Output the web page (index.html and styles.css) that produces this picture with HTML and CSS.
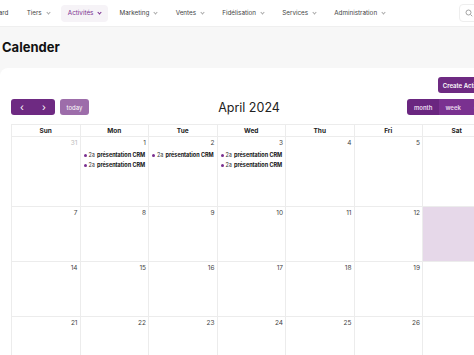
FILE: index.html
```html
<!DOCTYPE html>
<html lang="fr">
<head>
    <meta charset="UTF-8">
    <meta name="viewport" content="width=device-width, initial-scale=1.0">
    <title>Calender</title>
    <link rel="stylesheet" href="styles.css">
</head>
<body>
    <nav class="topbar">
        <ul class="menu">
            <li class="menu-item">Dashboard</li>
            <li class="menu-item">Tiers <span class="chev"></span></li>
            <li class="menu-item active">Activités <span class="chev"></span></li>
            <li class="menu-item">Marketing <span class="chev"></span></li>
            <li class="menu-item">Ventes <span class="chev"></span></li>
            <li class="menu-item">Fidélisation <span class="chev"></span></li>
            <li class="menu-item">Services <span class="chev"></span></li>
            <li class="menu-item">Administration <span class="chev"></span></li>
        </ul>
        <div class="search">
            <svg width="8" height="8" viewBox="0 0 16 16" fill="none" stroke="#9a9a9a" stroke-width="1.8">
                <circle cx="7" cy="7" r="5"/>
                <path d="M11 11l3.5 3.5"/>
            </svg>
        </div>
    </nav>

    <header class="page-title">
        <h1>Calender</h1>
    </header>

    <main class="card">
        <div class="actions">
            <button class="btn-create">Create Activity</button>
        </div>

        <div class="toolbar">
            <div class="toolbar-left">
                <div class="btn-group">
                    <button class="btn-nav">&#8249;</button>
                    <button class="btn-nav">&#8250;</button>
                </div>
                <button class="btn-today">today</button>
            </div>
            <h2 class="cal-title">April 2024</h2>
            <div class="toolbar-right">
                <div class="btn-group">
                    <button class="btn-view active">month</button>
                    <button class="btn-view">week</button>
                    <button class="btn-view">day</button>
                </div>
            </div>
        </div>

        <div class="calendar">
            <div class="dow">Sun</div>
            <div class="dow">Mon</div>
            <div class="dow">Tue</div>
            <div class="dow">Wed</div>
            <div class="dow">Thu</div>
            <div class="dow">Fri</div>
            <div class="dow">Sat</div>

            <div class="day tall other"><span class="num">31</span></div>
            <div class="day tall"><span class="num">1</span>
                <div class="event"><span class="dot"></span>2a <b>présentation CRM</b></div>
                <div class="event"><span class="dot"></span>2a <b>présentation CRM</b></div>
            </div>
            <div class="day tall"><span class="num">2</span>
                <div class="event"><span class="dot"></span>2a <b>présentation CRM</b></div>
            </div>
            <div class="day tall"><span class="num">3</span>
                <div class="event"><span class="dot"></span>2a <b>présentation CRM</b></div>
                <div class="event"><span class="dot"></span>2a <b>présentation CRM</b></div>
            </div>
            <div class="day tall"><span class="num">4</span></div>
            <div class="day tall"><span class="num">5</span></div>
            <div class="day tall"><span class="num">6</span></div>

            <div class="day"><span class="num">7</span></div>
            <div class="day"><span class="num">8</span></div>
            <div class="day"><span class="num">9</span></div>
            <div class="day"><span class="num">10</span></div>
            <div class="day"><span class="num">11</span></div>
            <div class="day"><span class="num">12</span></div>
            <div class="day today"><span class="num">13</span></div>

            <div class="day"><span class="num">14</span></div>
            <div class="day"><span class="num">15</span></div>
            <div class="day"><span class="num">16</span></div>
            <div class="day"><span class="num">17</span></div>
            <div class="day"><span class="num">18</span></div>
            <div class="day"><span class="num">19</span></div>
            <div class="day"><span class="num">20</span></div>

            <div class="day"><span class="num">21</span></div>
            <div class="day"><span class="num">22</span></div>
            <div class="day"><span class="num">23</span></div>
            <div class="day"><span class="num">24</span></div>
            <div class="day"><span class="num">25</span></div>
            <div class="day"><span class="num">26</span></div>
            <div class="day"><span class="num">27</span></div>
        </div>
    </main>
</body>
</html>
```

FILE: styles.css
```css
* {
    margin: 0;
    padding: 0;
    box-sizing: border-box;
    font-family: Inter, 'Noto Sans', sans-serif;
}

body {
    width: 474px;
    height: 355px;
    overflow: hidden;
    background: #f7f7f7;
    color: #222;
}

/* top navigation */
.topbar {
    height: 27px;
    background: white;
    border-bottom: 1px solid #efefef;
    display: flex;
    align-items: center;
    justify-content: space-between;
}

.menu {
    list-style: none;
    display: flex;
    align-items: center;
    gap: 4.2px;
    margin-left: -31px;
}

.menu-item {
    display: flex;
    align-items: center;
    height: 17px;
    padding: 0 7px;
    border-radius: 4px;
    font-size: 6.3px;
    color: #444;
    white-space: nowrap;
}

.menu-item.active {
    background: #f6f3f7;
    color: #7a2f8f;
}

.chev {
    width: 3px;
    height: 3px;
    margin-left: 5px;
    margin-top: -2px;
    border-right: 1px solid #aaa;
    border-bottom: 1px solid #aaa;
    transform: rotate(45deg);
}

.menu-item.active .chev {
    border-color: #7a2f8f;
}

.search {
    width: 20px;
    height: 18px;
    margin-right: -5px;
    border: 1px solid #eee;
    border-radius: 4px;
    display: flex;
    align-items: center;
    justify-content: center;
}

/* page header */
.page-title {
    height: 41px;
    display: flex;
    align-items: center;
    padding-left: 2px;
    padding-bottom: 1px;
}

h1 {
    font-size: 13px;
    font-weight: 700;
    color: #111;
}

/* calendar card */
.card {
    width: 502px;
    background: white;
    border-radius: 8px 8px 0 0;
    padding: 9px 11px 0;
}

.actions {
    display: flex;
    justify-content: flex-end;
}

button {
    border: none;
    color: white;
    cursor: pointer;
}

.btn-create {
    height: 16px;
    padding: 0 5px;
    background: #6e2a82;
    border-radius: 3px;
    font-size: 6px;
    font-weight: 600;
}

.toolbar {
    display: flex;
    align-items: center;
    margin-top: 6px;
    height: 16px;
}

.toolbar-left,
.toolbar-right {
    flex: 1;
    display: flex;
    gap: 5px;
}

.toolbar-right {
    justify-content: flex-end;
}

.btn-group {
    display: flex;
    border-radius: 3px;
    overflow: hidden;
}

.btn-nav {
    width: 22px;
    height: 16px;
    background: #6e2a82;
    font-size: 10px;
    line-height: 16px;
}

.btn-today {
    width: 29px;
    height: 16px;
    border-radius: 3px;
    background: #9d6daa;
    font-size: 6px;
}

.cal-title {
    font-size: 12.5px;
    font-weight: 400;
    color: #222;
    margin-right: 4px;
}

.btn-view {
    height: 16px;
    padding: 0 6.5px;
    background: #7a3190;
    color: #e9d9ee;
    font-size: 6px;
    font-weight: 600;
}

.btn-view.active {
    background: #6a2680;
}

/* month grid */
.calendar {
    display: grid;
    grid-template-columns: repeat(7, 68.5px);
    margin-top: 9px;
    border-top: 1px solid #ececec;
    border-left: 1px solid #ececec;
}

.dow {
    height: 12px;
    border-right: 1px solid #ececec;
    border-bottom: 1px solid #ececec;
    font-size: 6.5px;
    font-weight: 700;
    text-align: center;
    line-height: 12px;
    color: #222;
}

.day {
    height: 55px;
    padding: 2px 2px 0 3px;
    border-right: 1px solid #ececec;
    border-bottom: 1px solid #ececec;
}

.day.tall {
    height: 70px;
}

.day.today {
    background: #e6d8e9;
}

.num {
    display: block;
    text-align: right;
    font-size: 6.5px;
    color: #444;
    margin-bottom: 3px;
}

.other .num {
    color: #bbb;
}

.event {
    display: flex;
    align-items: center;
    height: 10px;
    font-size: 5.5px;
    color: #333;
    white-space: nowrap;
}

.event b {
    margin-left: 2px;
    font-weight: 700;
    color: #111;
}

.dot {
    width: 3px;
    height: 3px;
    border-radius: 50%;
    background: #7a2f8f;
    margin-right: 2px;
}
```
